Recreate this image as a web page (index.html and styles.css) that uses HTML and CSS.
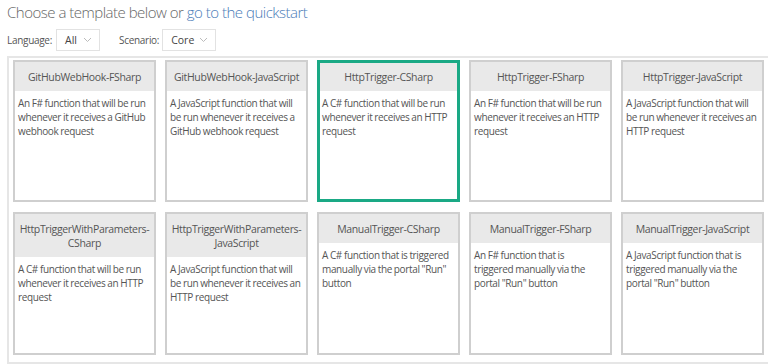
FILE: index.html
```html
<!DOCTYPE html>
<html>
<head>
<meta charset="utf-8">
<link rel="stylesheet" href="styles.css">
</head>
<body>
<h1 class="title">Choose a template below or <a class="link" href="#">go to the quickstart</a></h1>
<div class="filters">
  <span class="flabel">Language:</span>
  <div class="select sel-lang"><span>All</span><svg class="chev" width="9" height="6" viewBox="0 0 9 6"><path d="M1 1l3.5 3.5L8 1" fill="none" stroke="#bbb" stroke-width="1"/></svg></div>
  <span class="flabel scen">Scenario:</span>
  <div class="select sel-scen"><span>Core</span><svg class="chev" width="9" height="6" viewBox="0 0 9 6"><path d="M1 1l3.5 3.5L8 1" fill="none" stroke="#bbb" stroke-width="1"/></svg></div>
</div>
<div class="panel">
  <div class="grid">
    <div class="card"><div class="head">GitHubWebHook-FSharp</div><div class="desc">An F# function that will be run<br>whenever it receives a GitHub<br>webhook request</div></div>
    <div class="card"><div class="head">GitHubWebHook-JavaScript</div><div class="desc">A JavaScript function that will<br>be run whenever it receives a<br>GitHub webhook request</div></div>
    <div class="card selected"><div class="head">HttpTrigger-CSharp</div><div class="desc">A C# function that will be run<br>whenever it receives an HTTP<br>request</div></div>
    <div class="card"><div class="head">HttpTrigger-FSharp</div><div class="desc">An F# function that will be run<br>whenever it receives an HTTP<br>request</div></div>
    <div class="card"><div class="head">HttpTrigger-JavaScript</div><div class="desc">A JavaScript function that will<br>be run whenever it receives an<br>HTTP request</div></div>
    <div class="card"><div class="head">HttpTriggerWithParameters-<br>CSharp</div><div class="desc">A C# function that will be run<br>whenever it receives an HTTP<br>request</div></div>
    <div class="card"><div class="head">HttpTriggerWithParameters-<br>JavaScript</div><div class="desc">A JavaScript function that will<br>be run whenever it receives an<br>HTTP request</div></div>
    <div class="card"><div class="head">ManualTrigger-CSharp</div><div class="desc">A C# function that is triggered<br>manually via the portal "Run"<br>button</div></div>
    <div class="card"><div class="head">ManualTrigger-FSharp</div><div class="desc">An F# function that is<br>triggered manually via the<br>portal "Run" button</div></div>
    <div class="card"><div class="head">ManualTrigger-JavaScript</div><div class="desc">A JavaScript function that is<br>triggered manually via the<br>portal "Run" button</div></div>
  </div>
</div>
</body>
</html>
```
FILE: styles.css
```css
html, body {
  margin: 0;
  padding: 0;
  background: #fff;
  overflow: hidden;
}
body {
  font-family: "Open Sans", "Noto Sans", sans-serif;
  color: #555;
  width: 768px;
  height: 364px;
}
.title {
  margin: 0;
  padding: 2px 0 0 7px;
  height: 24px;
  font-size: 15px;
  letter-spacing: -0.5px;
  font-weight: 300;
  color: #666;
  line-height: 20px;
}
.link {
  color: #4a7cb8;
  text-decoration: none;
}
.filters {
  display: flex;
  align-items: center;
  height: 23px;
  padding-left: 7px;
  margin-top: 2px;
}
.flabel {
  font-size: 10px;
  letter-spacing: -0.3px;
  color: #555;
  margin-right: 4px;
}
.flabel.scen {
  margin-left: 19px;
  margin-right: 3px;
}
.select {
  box-sizing: border-box;
  height: 22px;
  border: 1px solid #e2e2e2;
  display: flex;
  align-items: center;
  justify-content: space-between;
  padding: 0 7px 0 8px;
  font-size: 10.5px;
  color: #444;
}
.sel-lang { width: 44px; }
.sel-scen { width: 54px; }
.chev { margin-top: 1px; }
.panel {
  box-sizing: border-box;
  margin: 5px 0 0 7px;
  width: 780px;
  height: 308px;
  border: 2px solid #e6e6e6;
  border-right: none;
  padding: 2px 0 0 4px;
}
.grid {
  display: grid;
  grid-template-columns: repeat(5, 143px);
  grid-template-rows: 142px 143px;
  column-gap: 9px;
  row-gap: 10px;
}
.card {
  box-sizing: border-box;
  border: 2px solid #cfcfcf;
  display: flex;
  flex-direction: column;
  overflow: hidden;
}
.card.selected {
  border: 3px solid #1aa985;
}
.head {
  background: #e9e9e9;
  text-align: center;
  font-size: 10.5px;
  letter-spacing: -0.35px;
  line-height: 14px;
  padding: 8px 4px 7px;
  color: #555;
  white-space: nowrap;
}
.selected .head {
  padding-top: 7px;
}
.desc {
  font-size: 10px;
  letter-spacing: -0.36px;
  word-spacing: -0.3px;
  line-height: 14px;
  padding: 5px 0 0 3px;
  color: #555;
  white-space: nowrap;
}
.selected .desc {
  padding-left: 2px;
}
```
